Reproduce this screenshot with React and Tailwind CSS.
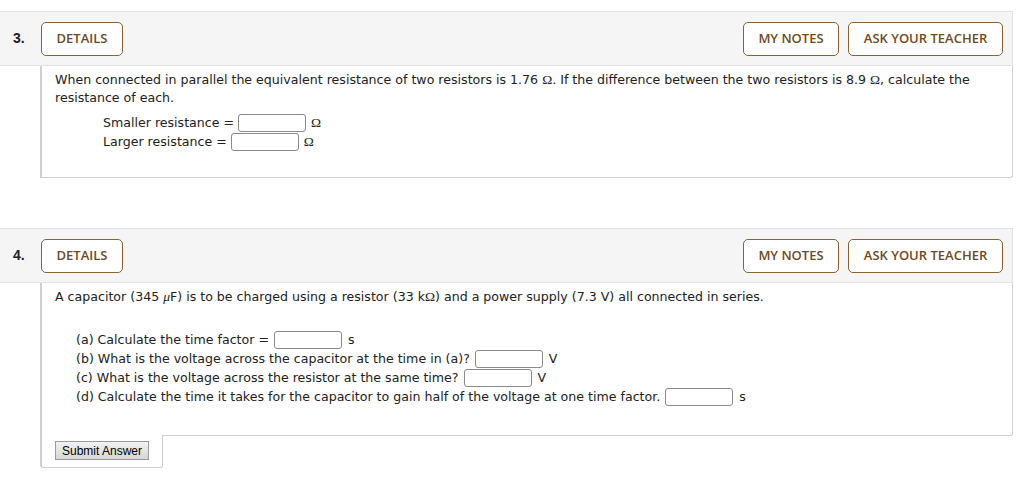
import React from "react";

const body = { fontFamily: '"DejaVu Sans", Verdana, sans-serif' };
const serif = { fontFamily: '"Liberation Serif", "Times New Roman", serif' };

const Om = () => (
  <span className="text-[13.5px]" style={serif}>
    Ω
  </span>
);

const Btn = ({ children, className = "" }) => (
  <button
    className={`h-[34px] rounded-[5px] border-[1.5px] border-[#8c6330] bg-white px-[14px] text-[13px] font-semibold text-[#6e4a1f] ${className}`}
    style={{ fontFamily: '"Open Sans", sans-serif' }}
  >
    {children}
  </button>
);

const Box = ({ w = "w-[68px]" }) => (
  <span
    className={`inline-block h-[18px] ${w} rounded-[3px] border border-[#8a8a8a] bg-white align-middle`}
  />
);

const Header = ({ num }) => (
  <div className="flex h-[55px] items-center border-y border-r border-[#e2e2e2] bg-[#f5f5f5]">
    <span
      className="w-[41px] pl-[13px] text-[14px] font-bold text-[#222]"
      style={{ fontFamily: '"Liberation Sans", Arial, sans-serif' }}
    >
      {num}.
    </span>
    <Btn className="w-[82px]">DETAILS</Btn>
    <div className="flex-1" />
    <Btn className="w-[96px]">MY NOTES</Btn>
    <Btn className="ml-[9px] mr-[9px] w-[155px]">ASK YOUR TEACHER</Btn>
  </div>
);

export default function App() {
  return (
    <div className="min-h-screen bg-white text-[12.6px] text-[#222]" style={body}>
      <div className="w-[1013px] pt-[11px]">
        {/* question 3 */}
        <Header num={3} />
        <div className="ml-[40px] h-[112px] rounded-br-[3px] border-b border-l-2 border-r border-[#cfcfcf] pl-[13px] pt-[5px] leading-[18px]">
          <p>
            When connected in parallel the equivalent resistance of two resistors is 1.76 <Om />. If
            the difference between the two resistors is 8.9 <Om />, calculate the resistance of each.
          </p>
          <div className="mt-[6px] pl-[48px] leading-[19px]">
            <div className="flex items-center gap-[4px]">
              Smaller resistance = <Box /> <span className="ml-[1px]"><Om /></span>
            </div>
            <div className="flex items-center gap-[4px]">
              Larger resistance = <Box /> <span className="ml-[1px]"><Om /></span>
            </div>
          </div>
        </div>

        {/* question 4 */}
        <div className="mt-[50px]">
          <Header num={4} />
          <div className="ml-[40px] h-[153px] rounded-br-[3px] border-b border-l-2 border-r border-[#cfcfcf] pl-[13px] pt-[5px] leading-[18px]">
            <p>
              A capacitor (345 <i style={serif} className="text-[13.5px]">μ</i>F) is to be charged
              using a resistor (33 k<Om />) and a power supply (7.3 V) all connected in series.
            </p>
            <div className="mt-[24px] pl-[21px] leading-[19px]">
              <div className="flex items-center gap-[5px]">
                (a) Calculate the time factor = <Box /> <span className="ml-[1px]">s</span>
              </div>
              <div className="flex items-center gap-[5px]">
                (b) What is the voltage across the capacitor at the time in (a)? <Box />{" "}
                <span className="ml-[1px]">V</span>
              </div>
              <div className="flex items-center gap-[5px]">
                (c) What is the voltage across the resistor at the same time? <Box />{" "}
                <span className="ml-[1px]">V</span>
              </div>
              <div className="flex items-center gap-[5px]">
                (d) Calculate the time it takes for the capacitor to gain half of the voltage at one
                time factor. <Box /> <span className="ml-[1px]">s</span>
              </div>
            </div>
          </div>
          <div className="-mt-px ml-[40px] h-[33px] w-[123px] rounded-b-[3px] border-b border-l-2 border-r border-[#cfcfcf] bg-white pl-[13px] pt-[6px]">
            <button
              className="h-[19px] border border-[#9a9a9a] bg-gradient-to-b from-[#f2f2f2] to-[#d6d6d6] px-[6px] text-[12px] leading-[16px] text-black"
              style={{ fontFamily: '"Liberation Sans", Arial, sans-serif' }}
            >
              Submit Answer
            </button>
          </div>
        </div>
      </div>
    </div>
  );
}
